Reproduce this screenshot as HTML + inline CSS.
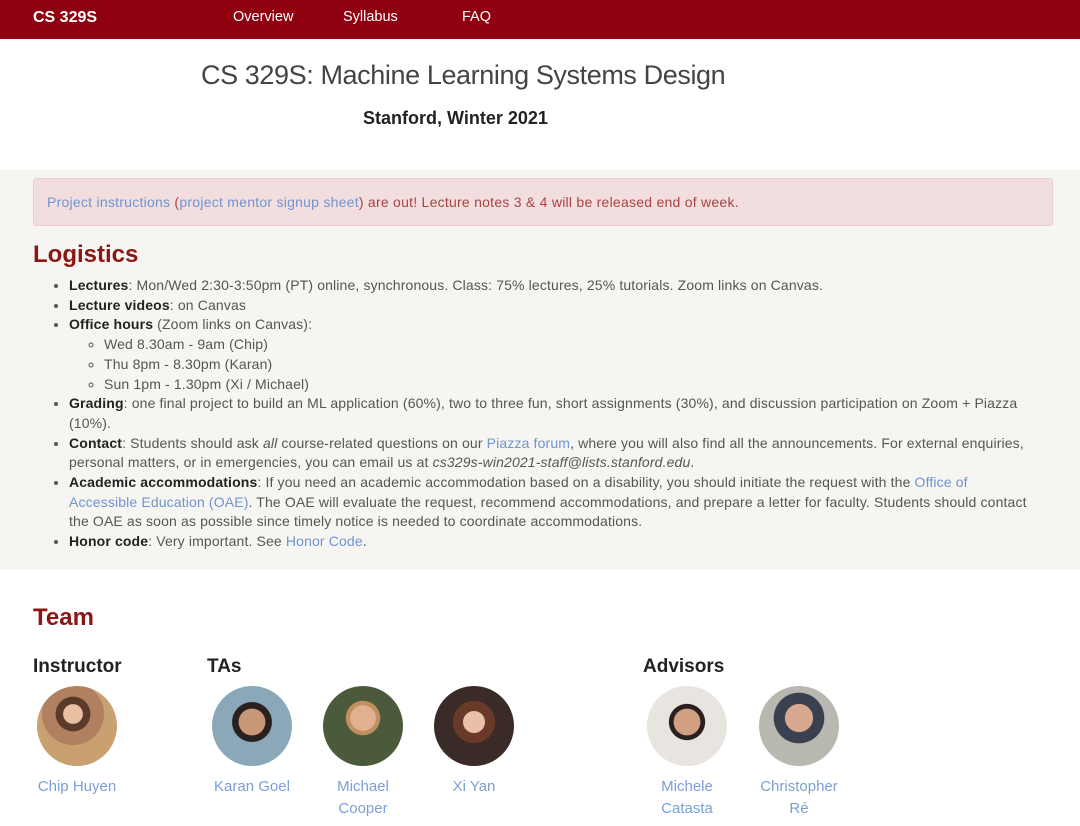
<!DOCTYPE html>
<html><head><meta charset="utf-8"><style>
*{margin:0;padding:0;box-sizing:border-box}
body{width:1080px;height:826px;overflow:hidden;background:#fff;font-family:"Liberation Sans",sans-serif;color:#333;position:relative}
.nav{position:absolute;left:0;top:0;width:1080px;height:39px;background:#8f0010}
.nav span{position:absolute;top:9px;color:#fff;font-size:14.5px}
.t{position:absolute;white-space:nowrap}
.gray{position:absolute;left:0;top:170px;width:1080px;height:400px;background:#f6f5f1}
.alert{position:absolute;left:33px;top:178px;width:1020px;height:48px;background:#f2dede;border:1px solid #ebccd1;border-radius:3px;color:#a94442;font-size:14px;padding:15px 13px;letter-spacing:0.25px;white-space:nowrap}
a{color:#6f95cf;text-decoration:none}
h2{position:absolute;color:#8c1515;font-size:24px;font-weight:bold}
ul.l{position:absolute;left:51px;top:276px;font-size:14px;line-height:19.7px;letter-spacing:0.14px;color:#555;white-space:nowrap;list-style:disc}
ul.l li{margin-left:18px}
ul.l ul{list-style:circle;margin-left:17px}
b{color:#222}
h3{position:absolute;font-size:19px;font-weight:bold;color:#222}
.av{position:absolute;width:80px;height:80px;border-radius:50%;top:686px}
.nm{position:absolute;top:776px;width:110px;text-align:center;font-size:15px;line-height:22px;color:#7b9fd6}
</style></head><body>
<div class="nav"><span style="left:33px;font-weight:bold;font-size:16px">CS 329S</span><span style="left:233px">Overview</span><span style="left:343px">Syllabus</span><span style="left:462px">FAQ</span></div>
<div class="t" style="left:201px;top:60px;font-size:27px;color:#444;letter-spacing:-0.4px">CS 329S: Machine Learning Systems Design</div>
<div class="t" style="left:363px;top:108px;font-size:18px;font-weight:bold;color:#222">Stanford, Winter 2021</div>
<div class="gray"></div>
<div class="alert"><a>Project instructions</a> (<a>project mentor signup sheet</a>) are out! Lecture notes 3 &amp; 4 will be released end of week.</div>
<h2 style="left:33px;top:241px">Logistics</h2>
<ul class="l">
<li><b>Lectures</b>: Mon/Wed 2:30-3:50pm (PT) online, synchronous. Class: 75% lectures, 25% tutorials. Zoom links on Canvas.</li>
<li><b>Lecture videos</b>: on Canvas</li>
<li><b>Office hours</b> (Zoom links on Canvas):<ul><li>Wed 8.30am - 9am (Chip)</li><li>Thu 8pm - 8.30pm (Karan)</li><li>Sun 1pm - 1.30pm (Xi / Michael)</li></ul></li>
<li><b>Grading</b>: one final project to build an ML application (60%), two to three fun, short assignments (30%), and discussion participation on Zoom + Piazza<br>(10%).</li>
<li><b>Contact</b>: Students should ask <i>all</i> course-related questions on our <a>Piazza forum</a>, where you will also find all the announcements. For external enquiries,<br>personal matters, or in emergencies, you can email us at <i>cs329s-win2021-staff@lists.stanford.edu</i>.</li>
<li><b>Academic accommodations</b>: If you need an academic accommodation based on a disability, you should initiate the request with the <a>Office of</a><br><a>Accessible Education (OAE)</a>. The OAE will evaluate the request, recommend accommodations, and prepare a letter for faculty. Students should contact<br>the OAE as soon as possible since timely notice is needed to coordinate accommodations.</li>
<li><b>Honor code</b>: Very important. See <a>Honor Code</a>.</li>
</ul>
<h2 style="left:33px;top:604px">Team</h2>
<h3 style="left:33px;top:656px">Instructor</h3>
<h3 style="left:207px;top:656px">TAs</h3>
<h3 style="left:643px;top:656px">Advisors</h3>
<div class="av" style="left:37px;background:radial-gradient(circle at 45% 35%,#e8c0a0 0 14%,#5a3a2a 15% 25%,#b08060 26% 45%,#c9a070 46%)"></div>
<div class="av" style="left:212px;background:radial-gradient(circle at 50% 45%,#c89878 0 22%,#2a2020 23% 33%,#8aa8b8 34%)"></div>
<div class="av" style="left:323px;background:radial-gradient(circle at 50% 40%,#e0b090 0 20%,#c09060 21% 27%,#4a5a3a 28%)"></div>
<div class="av" style="left:434px;background:radial-gradient(circle at 50% 45%,#e8c0a8 0 18%,#6a3a28 19% 35%,#3a2a28 36%)"></div>
<div class="av" style="left:647px;background:radial-gradient(circle at 50% 45%,#d0a080 0 22%,#2a2020 23% 30%,#e8e4e0 31%)"></div>
<div class="av" style="left:759px;background:radial-gradient(circle at 50% 40%,#d8a890 0 22%,#3a4050 23% 40%,#b8b8b0 41%)"></div>
<div class="nm" style="left:22px">Chip Huyen</div>
<div class="nm" style="left:197px">Karan Goel</div>
<div class="nm" style="left:308px">Michael<br>Cooper</div>
<div class="nm" style="left:419px">Xi Yan</div>
<div class="nm" style="left:632px">Michele<br>Catasta</div>
<div class="nm" style="left:744px">Christopher<br>Ré</div>
</body></html>
